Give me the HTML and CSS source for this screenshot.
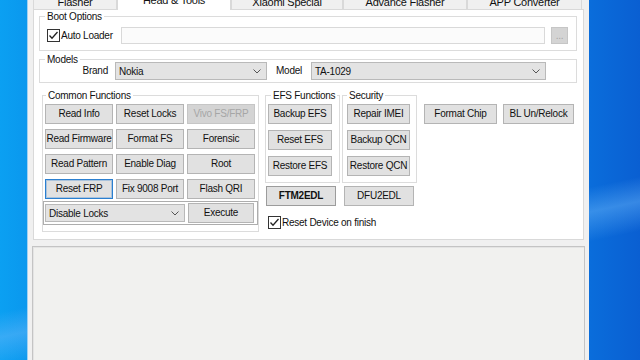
FILE: index.html
```html
<!DOCTYPE html>
<html>
<head>
    <meta charset="utf-8" />
    <title>Head &amp; Tools</title>
    <link rel="stylesheet" href="styles.css">
</head>
<body>
    <div class="window">
        <div class="tabs">
            <div class="tab t-flasher">Flasher</div>
            <div class="tab t-head active">Head &amp; Tools</div>
            <div class="tab t-xiaomi">Xiaomi Special</div>
            <div class="tab t-adv">Advance Flasher</div>
            <div class="tab t-app">APP Converter</div>
        </div>
        <div class="page">
            <div class="group boot">
                <span class="group-title">Boot Options</span>
                <label class="check auto">
                    <svg width="13" height="13" viewBox="0 0 13 13"><rect x=".5" y=".5" width="12" height="12" fill="#fff" stroke="#333"/><path d="M2.5 6.5 L5 9.2 L10.5 3" fill="none" stroke="#222" stroke-width="1.3"/></svg>
                    <span>Auto Loader</span>
                </label>
                <div class="path"></div>
                <button class="btn dots" disabled>...</button>
            </div>
            <div class="group models">
                <span class="group-title">Models</span>
                <span class="lbl lbl-brand">Brand</span>
                <div class="combo brand">
                    <span>Nokia</span>
                    <svg width="8" height="5" viewBox="0 0 8 5"><path d="M.5 .5 L4 4 L7.5 .5" fill="none" stroke="#555"/></svg>
                </div>
                <span class="lbl lbl-model">Model</span>
                <div class="combo model">
                    <span>TA-1029</span>
                    <svg width="8" height="5" viewBox="0 0 8 5"><path d="M.5 .5 L4 4 L7.5 .5" fill="none" stroke="#555"/></svg>
                </div>
            </div>
            <div class="funcs">
                <div class="group common">
                    <span class="group-title">Common Functions</span>
                    <div class="grid">
                        <button class="btn">Read Info</button>
                        <button class="btn">Reset Locks</button>
                        <button class="btn" disabled>Vivo FS/FRP</button>
                        <button class="btn">Read Firmware</button>
                        <button class="btn">Format FS</button>
                        <button class="btn">Forensic</button>
                        <button class="btn">Read Pattern</button>
                        <button class="btn">Enable Diag</button>
                        <button class="btn">Root</button>
                        <button class="btn default">Reset FRP</button>
                        <button class="btn">Fix 9008 Port</button>
                        <button class="btn">Flash QRI</button>
                    </div>
                    <div class="exec">
                        <div class="combo locks">
                            <span>Disable Locks</span>
                            <svg width="8" height="5" viewBox="0 0 8 5"><path d="M.5 .5 L4 4 L7.5 .5" fill="none" stroke="#555"/></svg>
                        </div>
                        <button class="btn execute">Execute</button>
                    </div>
                </div>
                <div class="mid">
                    <div class="mid-groups">
                        <div class="group efs">
                            <span class="group-title">EFS Functions</span>
                            <button class="btn">Backup EFS</button>
                            <button class="btn">Reset EFS</button>
                            <button class="btn">Restore EFS</button>
                        </div>
                        <div class="group sec">
                            <span class="group-title">Security</span>
                            <button class="btn">Repair IMEI</button>
                            <button class="btn">Backup QCN</button>
                            <button class="btn">Restore QCN</button>
                        </div>
                    </div>
                    <div class="edl">
                        <button class="btn bold">FTM2EDL</button>
                        <button class="btn">DFU2EDL</button>
                    </div>
                    <label class="check reset">
                        <svg width="13" height="13" viewBox="0 0 13 13"><rect x=".5" y=".5" width="12" height="12" fill="#fff" stroke="#333"/><path d="M2.5 6.5 L5 9.2 L10.5 3" fill="none" stroke="#222" stroke-width="1.3"/></svg>
                        <span>Reset Device on finish</span>
                    </label>
                </div>
                <div class="extra">
                    <button class="btn chip">Format Chip</button>
                    <button class="btn relock">BL Un/Relock</button>
                </div>
            </div>
        </div>
        <div class="log"></div>
    </div>
</body>
</html>
```

FILE: styles.css
```css
html, body {
    margin: 0;
    padding: 0;
}
body {
    height: 360px;
    overflow: hidden;
    padding-left: 27px;
    box-sizing: border-box;
    background:
        linear-gradient(168deg, transparent 0 63%, rgba(110,185,250,.45) 68%, transparent 74%),
        linear-gradient(90deg, #0ba0f2 0, #0a98ee 26px, #0a6ddb 590px, #0a5fd2 640px);
    font-family: "Liberation Sans", Arial, sans-serif;
    font-size: 10px;
    letter-spacing: -0.25px;
    color: #111;
}

.window {
    width: 562px;
    height: 374px;
    margin-top: -13px;
    box-sizing: border-box;
    border-left: 1px solid #9fd0f2;
    padding: 0 5px;
    background: #f0f0f0;
}

/* tabs */
.tabs {
    display: flex;
    align-items: flex-end;
    height: 22px;
}
.tab {
    box-sizing: border-box;
    height: 20px;
    border: 1px solid #d9d9d9;
    border-bottom: 0;
    background: #f0f0f0;
    text-align: center;
    padding-top: 4px;
    line-height: 16px;
    font-size: 11px;
    white-space: nowrap;
}
.tab.active {
    height: 23px;
    margin-bottom: -1px;
    padding-top: 4px;
    background: #fff;
    position: relative;
    z-index: 1;
}
.t-flasher { width: 84px; }
.t-head { width: 114px; }
.t-xiaomi { width: 112px; }
.t-adv { width: 124px; }
.t-app { width: 115px; }

.page {
    box-sizing: border-box;
    height: 231px;
    border: 1px solid #d9d9d9;
    background: #fff;
    padding: 6px 0 0 5px;
}

/* group boxes */
.group {
    position: relative;
    box-sizing: border-box;
    border: 1px solid #dcdcdc;
}
.group-title {
    position: absolute;
    top: -7px;
    left: 5px;
    padding: 0 2px;
    background: #fff;
    line-height: 13px;
    white-space: nowrap;
}
.common .group-title { left: 3px; }
.sec .group-title { left: 4px; }

.boot {
    width: 538px;
    height: 35px;
    display: flex;
    align-items: flex-start;
    padding: 10px 0 0 7px;
}
.check {
    display: flex;
    align-items: center;
    height: 17px;
    white-space: nowrap;
}
.check svg {
    display: block;
    margin-right: 1px;
}
.auto { width: 74px; }
.path {
    box-sizing: border-box;
    width: 424px;
    height: 17px;
    border: 1px solid #d9d9d9;
    background: #fbfbfb;
}

.models {
    width: 538px;
    height: 24px;
    margin-top: 8px;
    display: flex;
    align-items: flex-start;
    padding-top: 2px;
}
.lbl {
    line-height: 18px;
}
.lbl-brand {
    width: 68px;
    margin-right: 7px;
    text-align: right;
}
.lbl-model {
    width: 35px;
    margin-left: 9px;
}

.combo {
    box-sizing: border-box;
    height: 18px;
    display: flex;
    align-items: center;
    justify-content: space-between;
    padding: 0 5px 0 3px;
    border: 1px solid #b9b9b9;
    background: #e3e3e3;
}
.combo svg {
    display: block;
}
.brand { width: 152px; }
.model { width: 235px; }
.locks { width: 140px; }

/* buttons */
.btn {
    box-sizing: border-box;
    height: 20px;
    margin: 0;
    padding: 0;
    border: 1px solid #b4b4b4;
    background: #e1e1e1;
    font: inherit;
    letter-spacing: inherit;
    color: #111;
    line-height: 18px;
    text-align: center;
    white-space: nowrap;
}
.btn[disabled] {
    background: #d4d4d4;
    border-color: #c6c6c6;
    color: #a6a6a6;
}
.btn.default {
    border-color: #2a7fd0;
    box-shadow: inset 0 0 0 1px rgba(42,127,208,.3);
}
.btn.bold {
    font-weight: bold;
    border-color: #9c9c9c;
}
.dots {
    width: 17px;
    height: 17px;
    margin-left: 6px;
    line-height: 12px;
}

.funcs {
    display: flex;
    align-items: flex-start;
    margin: 12px 0 0 3px;
}
.common {
    width: 217px;
    height: 137px;
    padding: 8px 0 0 2px;
}
.grid {
    display: grid;
    grid-template-columns: repeat(3, 68px);
    grid-auto-rows: 20px;
    column-gap: 3px;
    row-gap: 5px;
}
.exec {
    box-sizing: border-box;
    width: 215px;
    height: 24px;
    margin: 2px 0 0 -2px;
    border: 1px solid #adadad;
    display: flex;
    align-items: center;
    gap: 3px;
    padding-left: 1px;
}
.execute { width: 66px; }

.mid {
    margin-left: 6px;
}
.mid-groups {
    display: flex;
    gap: 2px;
}
.efs, .sec {
    width: 75px;
    height: 88px;
    display: flex;
    flex-direction: column;
    gap: 6px;
    padding-top: 8px;
}
.efs { padding-left: 2px; }
.efs .btn { width: 64px; }
.sec { padding-left: 4px; }
.sec .btn { width: 63px; }

.edl {
    display: flex;
    gap: 8px;
    margin: 3px 0 0 1px;
}
.edl .btn { width: 70px; }
.reset {
    margin: 8px 0 0 3px;
}

.extra {
    display: flex;
    gap: 6px;
    margin: 9px 0 0 7px;
}
.chip { width: 73px; }
.relock { width: 71px; }

.log {
    box-sizing: border-box;
    width: 553px;
    height: 130px;
    margin: 6px 0 0 -1px;
    border: 1px solid #c4c4c4;
    box-shadow: inset 1px 1px 0 #e4e4e4;
    background: #f1f1ef;
}
```
